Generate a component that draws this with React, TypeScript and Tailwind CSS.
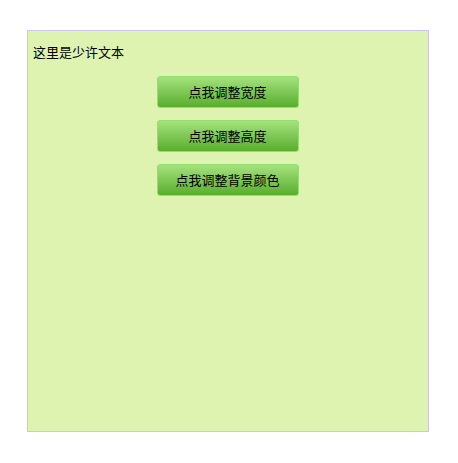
export default function App() {
  const labels = ['点我调整宽度', '点我调整高度', '点我调整背景颜色'];
  return (
    <div className="w-[458px] h-[463px] bg-white pt-[30px] pl-[27px]">
      <div
        className="w-[402px] h-[402px] border border-[#c9c6f0] bg-[#dff3b1] pl-[5px] pt-[11px]"
        style={{ fontFamily: '"Noto Sans CJK SC", "Liberation Sans", sans-serif' }}
      >
        <p className="text-[13px] leading-[19px] text-black">这里是少许文本</p>
        <div className="mt-[15px] flex flex-col items-center gap-[12px] pr-[6px]">
          {labels.map((l) => (
            <button
              key={l}
              className="w-[142px] h-[32px] rounded-[3px] border border-[#93dd72] bg-gradient-to-b from-[#a4e27c] to-[#58ae29] text-[13px] text-black"
            >
              {l}
            </button>
          ))}
        </div>
      </div>
    </div>
  );
}
